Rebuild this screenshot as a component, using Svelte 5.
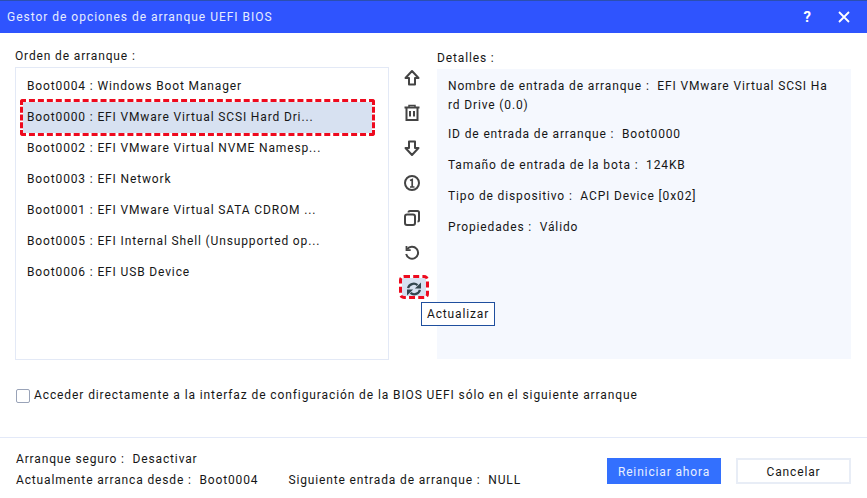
<script>
  const boots = [
    'Boot0004 : Windows Boot Manager',
    'Boot0000 : EFI VMware Virtual SCSI Hard Dri...',
    'Boot0002 : EFI VMware Virtual NVME Namesp...',
    'Boot0003 : EFI Network',
    'Boot0001 : EFI VMware Virtual SATA CDROM ...',
    'Boot0005 : EFI Internal Shell (Unsupported op...',
    'Boot0006 : EFI USB Device'
  ];
</script>

<div class="win">
  <header class="title">
    <span class="title-text">Gestor de opciones de arranque UEFI BIOS</span>
    <span class="q">?</span>
    <svg class="x" width="12" height="12" viewBox="0 0 12 12"><path d="M1 1l10 10M11 1L1 11" stroke="#fff" stroke-width="1.8" fill="none"/></svg>
  </header>

  <main class="main">
    <section class="left">
      <div class="label">Orden de arranque :</div>
      <ul class="list">
        {#each boots as b, i}
          <li class="item" class:sel={i === 1}>{b}</li>
        {/each}
      </ul>
    </section>

    <div class="tools">
      <span class="tool"><svg width="18" height="18" viewBox="0 0 18 18" fill="none" stroke="#444" stroke-width="2" stroke-linejoin="round"><path d="M9 2L2.500 9H6v6.500h6V9h3.500z"/></svg></span>
      <span class="tool"><svg width="18" height="18" viewBox="0 0 18 18" fill="none" stroke="#444" stroke-width="2"><path d="M1.500 3.500h15M3.500 3.500v12.500h11V3.500M7 7v5.500M11 7v5.500"/><path d="M6 3V1.500h6V3" stroke-width="1.500"/></svg></span>
      <span class="tool"><svg width="18" height="18" viewBox="0 0 18 18" fill="none" stroke="#444" stroke-width="2" stroke-linejoin="round"><path d="M9 16l6.500-7H12V2.500H6V9H2.500z"/></svg></span>
      <span class="tool"><svg width="18" height="18" viewBox="0 0 18 18" fill="none" stroke="#444" stroke-width="2"><circle cx="9" cy="9" r="7"/><path d="M7 6.500L9.200 5.500V13M7 13h4.500" stroke-width="1.700"/></svg></span>
      <span class="tool"><svg width="18" height="18" viewBox="0 0 18 18" fill="none" stroke="#444" stroke-width="2" stroke-linejoin="round"><rect x="2" y="5.500" width="10" height="10.500" rx="2"/><path d="M5.500 3.500Q5.500 2 7 2h7.500Q16 2 16 3.500V11q0 1.500-1.500 1.500"/></svg></span>
      <span class="tool"><svg width="18" height="18" viewBox="0 0 18 18" fill="none" stroke="#444" stroke-width="2"><path d="M4.200 5.200A6 6 0 1 1 3.200 10"/><path d="M3.500 2v4.200h4.200" stroke-width="1.800"/></svg></span>
      <span class="tool refresh"><svg width="16" height="14" viewBox="0 0 18 16" fill="none" stroke="#33464f" stroke-width="2.600"><path d="M2.300 7a6.500 6 0 0 1 10.700-3.500"/><path d="M15.700 9a6.500 6 0 0 1-10.700 3.500"/><path d="M17 .5v7h-7z" fill="#33464f" stroke="none"/><path d="M1 15.500v-7h7z" fill="#33464f" stroke="none"/></svg>
        <span class="tip">Actualizar</span>
      </span>
    </div>

    <section class="right">
      <div class="label">Detalles :</div>
      <div class="details">
        <p class="wrap">Nombre de entrada de arranque :&nbsp; EFI VMware Virtual SCSI Hard Drive (0.0)</p>
        <p>ID de entrada de arranque :&nbsp; Boot0000</p>
        <p>Tamaño de entrada de la bota :&nbsp; 124KB</p>
        <p>Tipo de dispositivo :&nbsp; ACPI Device [0x02]</p>
        <p>Propiedades :&nbsp; Válido</p>
      </div>
    </section>
  </main>

  <label class="check"><span class="box"></span>Acceder directamente a la interfaz de configuración de la BIOS UEFI sólo en el siguiente arranque</label>

  <footer class="foot">
    <div class="info">
      <div>Arranque seguro :&nbsp; Desactivar</div>
      <div class="info2"><span>Actualmente arranca desde :&nbsp; Boot0004</span><span>Siguiente entrada de arranque :&nbsp; NULL</span></div>
    </div>
    <button class="btn primary">Reiniciar ahora</button>
    <button class="btn">Cancelar</button>
  </footer>
</div>

<style>
  :global(body) { margin: 0; background: #fff; }
  .win {
    width: 867px; height: 498px; box-sizing: border-box; overflow: hidden;
    display: flex; flex-direction: column;
    font-family: Roboto, "Liberation Sans", sans-serif; font-size: 12px; letter-spacing: 0.86px; color: #161616;
  }
  .title {
    height: 33px; box-sizing: border-box; flex: none;
    background: #2f54fe; border-top: 1px solid #2b4fb0; color: #fff;
    display: flex; align-items: center; padding: 0 17px 0 7px;
  }
  .title-text { flex: 1; color: #e6ecff; letter-spacing: 0.98px; }
  .q { font-size: 15px; font-weight: 700; margin-right: 27px; letter-spacing: 0; }
  .main { display: flex; height: 326px; flex: none; padding: 0 16px 0 15px; box-sizing: border-box; }
  .left { width: 374px; flex: none; }
  .label { height: 34px; line-height: 14px; padding-top: 16px; box-sizing: border-box; }
  .list {
    margin: 0; padding: 3px 0 0; list-style: none; height: 293px; box-sizing: border-box;
    border: 1px solid #e3e9f6;
  }
  .item { height: 31px; line-height: 31px; padding-left: 11px; white-space: nowrap; }
  .item.sel {
    background: #d7e1f1; position: relative; margin: 0 16px 0 7px; padding-left: 4px;
  }
  .item.sel::after {
    content: ""; position: absolute; inset: -3px; border: 3px dashed #ee0a1e; border-radius: 3px;
  }
  .tools { width: 48px; flex: none; display: flex; flex-direction: column; align-items: center; padding: 27px 2px 0 0; box-sizing: border-box; }
  .tool { width: 24px; height: 35px; display: flex; align-items: center; justify-content: center; flex: none; position: relative; }
  .refresh::before {
    content: ""; position: absolute; left: 2px; top: 8px; width: 24px; height: 18px;
    background: #d7e1f1; outline: 3px dashed #ee0a1e; outline-offset: 0; border-radius: 2px;
  }
  .refresh svg { position: relative; margin: 3px 0 0 4px; }
  .tip {
    position: absolute; left: 21px; top: 32px; height: 24px; line-height: 23px; padding: 0 5px;
    box-sizing: border-box; background: #fff; border: 1px solid #1f4f9e; white-space: nowrap;
  }
  .right { flex: 1; min-width: 0; }
  .right .label { height: 36px; padding-top: 18px; }
  .details { background: #f5f8fe; height: 290px; box-sizing: border-box; padding: 1px 20px 1px 11px; }
  .details p { margin: 0; height: 31px; line-height: 31px; white-space: nowrap; }
  .details p.wrap { white-space: normal; word-break: break-all; line-height: 19px; height: 49px; padding-top: 7px; box-sizing: border-box; }
  .check { display: flex; align-items: center; padding: 28px 0 0 16px; height: 17px; line-height: 17px; letter-spacing: 0.9px; }
  .box { width: 12px; height: 12px; border: 1px solid #99a3b8; border-radius: 2px; margin-right: 4px; }
  .foot {
    margin-top: 33px; flex: 1; border-top: 1px solid #e3e9f8; display: flex; align-items: flex-start;
    padding: 11px 16px 0 16px; box-sizing: border-box;
  }
  .info { flex: 1; line-height: 20.5px; }
  .info2 { display: flex; gap: 30px; }
  .btn {
    width: 115px; height: 26px; box-sizing: border-box; background: #fff; border: 2px solid #e8edf6;
    font: inherit; line-height: 22px; letter-spacing: inherit; color: #161616; padding: 1px 0 0; margin: 9px 0 0 15px;
  }
  .btn.primary { width: 114px; background: #3370fe; border: 0; color: #e8efff; margin-left: 0; }
</style>
